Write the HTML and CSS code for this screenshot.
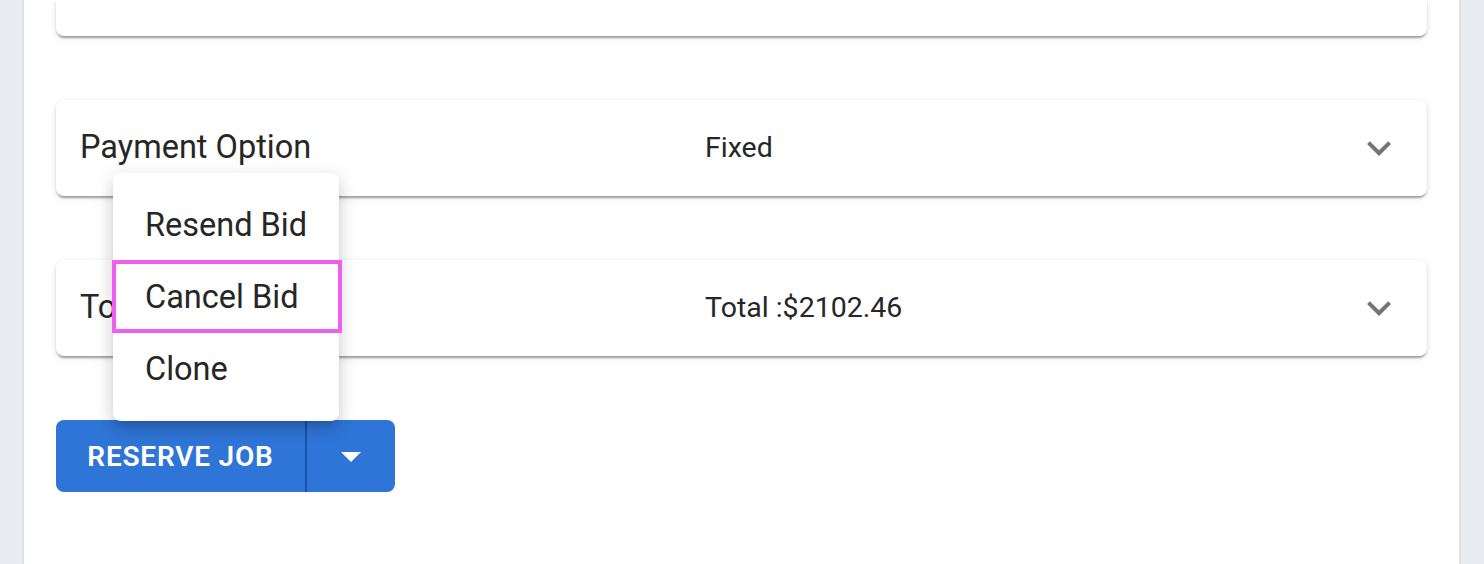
FILE: index.html
```html
<!DOCTYPE html>
<html lang="en">
<head>
<meta charset="utf-8">
<title>Job bid</title>
<link rel="stylesheet" href="styles.css">
</head>
<body>
<div class="shell">
  <main class="panel">
    <div class="stack">
      <section class="card card-top"></section>

      <section class="card">
        <div class="summary">
          <span class="label">Payment Option</span>
          <span class="value">Fixed</span>
          <svg class="chev" viewBox="0 0 24 24" width="48" height="48"><path d="M16.59 8.59 12 13.17 7.41 8.59 6 10l6 6 6-6z"/></svg>
        </div>
      </section>

      <section class="card">
        <div class="summary">
          <span class="label">Total</span>
          <span class="value">Total :$2102.46</span>
          <svg class="chev" viewBox="0 0 24 24" width="48" height="48"><path d="M16.59 8.59 12 13.17 7.41 8.59 6 10l6 6 6-6z"/></svg>
        </div>
      </section>

      <div class="actions">
        <div class="split">
          <button class="split-main" type="button">Reserve Job</button>
          <button class="split-toggle" type="button" aria-label="More actions"><span class="tri"></span></button>
        </div>
        <ul class="menu">
          <li class="menu-item">Resend Bid</li>
          <li class="menu-item is-marked">Cancel Bid<span class="mark"></span></li>
          <li class="menu-item">Clone</li>
        </ul>
      </div>
    </div>
  </main>
</div>
</body>
</html>
```
FILE: styles.css
```css
html, body {
  margin: 0;
  padding: 0;
  height: 100%;
  background: #e9edf2;
  font-family: Roboto, "Liberation Sans", Arial, sans-serif;
  color: #262626;
}

.shell {
  display: flex;
  height: 100%;
  padding: 0 23px 0 22px;
  box-sizing: border-box;
}

.panel {
  flex: 1;
  background: #ffffff;
  border-left: 2px solid #dde1e6;
  border-right: 2px solid #dde1e6;
  padding: 0 32px 0 32px;
  overflow: hidden;
}

.stack {
  display: flex;
  flex-direction: column;
  gap: 64px;
  position: relative;
}

.card {
  height: 96px;
  background: #ffffff;
  border-radius: 8px;
  box-shadow: 0 4px 2px -2px rgba(0,0,0,0.2), 0 2px 2px 0 rgba(0,0,0,0.14), 0 2px 6px 0 rgba(0,0,0,0.12);
}

.card-top {
  height: 36px;
  border-radius: 0 0 8px 8px;
}

.summary {
  height: 100%;
  display: grid;
  grid-template-columns: 625px 1fr 48px;
  align-items: center;
  padding: 0 24px 0 24px;
}

.label {
  font-size: 32.5px;
  line-height: 1.4;
  white-space: nowrap;
}

.value {
  font-size: 28.5px;
  line-height: 1.4;
  white-space: nowrap;
}

.chev {
  fill: #757575;
  display: block;
}

.actions {
  position: relative;
}

.split {
  display: inline-flex;
  height: 72px;
  border-radius: 8px;
  overflow: hidden;
  background: #2f75d7;
}

.split-main {
  width: 251px;
  border: 0;
  background: transparent;
  color: #ffffff;
  font-family: inherit;
  font-size: 28px;
  font-weight: 600;
  letter-spacing: 0.8px;
  text-transform: uppercase;
  border-right: 2px solid #1a4fad;
  padding: 0;
}

.split-toggle {
  width: 88px;
  border: 0;
  background: transparent;
  padding: 0;
  display: flex;
  align-items: center;
  justify-content: center;
}

.tri {
  width: 0;
  height: 0;
  border-left: 10px solid transparent;
  border-right: 10px solid transparent;
  border-top: 10px solid #ffffff;
  margin-top: 2px;
}

.menu {
  position: absolute;
  left: 57px;
  bottom: 71px;
  width: 226px;
  margin: 0;
  padding: 16px 0;
  list-style: none;
  background: #ffffff;
  border-radius: 8px;
  box-shadow: 0 6px 10px -6px rgba(0,0,0,0.2), 0 8px 14px 1px rgba(0,0,0,0.10), 0 4px 20px 3px rgba(0,0,0,0.08);
}

.menu-item {
  position: relative;
  height: 72px;
  line-height: 72px;
  padding: 0 32px;
  font-size: 32.5px;
  white-space: nowrap;
}

.mark {
  position: absolute;
  left: -1px;
  top: -1px;
  width: 230px;
  height: 73px;
  box-sizing: border-box;
  border: 4.5px solid #ee5ef1;
}
```
